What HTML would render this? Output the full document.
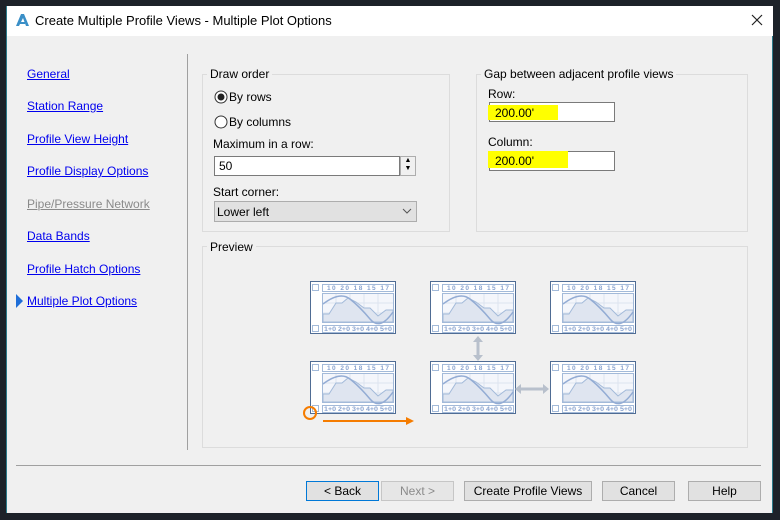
<!DOCTYPE html><html><head><style>
*{margin:0;padding:0;box-sizing:border-box}
body{width:780px;height:520px;background:#1d2229;position:relative;overflow:hidden;font-family:"Liberation Sans",sans-serif;font-size:12px;color:#000}
.a{position:absolute}
.win{left:6px;top:6px;width:767px;height:507px;background:#f0f0f0;border-left:1px solid #2b7a8a;border-right:1px solid #2b7a8a}
.title{left:7px;top:6px;width:766px;height:30px;background:#fff}
.lnk{color:#0000ee;text-decoration:underline;left:27px}
.grp{border:1px solid #dcdcdc}
.leg{background:#f0f0f0;padding:0 3px}
.btn{border:1px solid #adadad;background:#e1e1e1;text-align:center;line-height:18px;height:20px;top:481px}
.inp{background:#fff;border:1px solid #7a7a7a;height:20px}
</style></head><body>
<div class="a win"></div>
<div class="a title"></div>
<svg class="a" style="left:14px;top:12px" width="16" height="16"><path d="M2 14 L7 2 H10 L15 14 H12 L9 6 L5 14Z M6 10 H11 V12 H6Z" fill="#3a8fc7"/></svg>
<div class="a" style="left:35px;top:13px;font-size:13px">Create Multiple Profile Views - Multiple Plot Options</div>
<svg class="a" style="left:751px;top:14px" width="12" height="12"><path d="M1 1 L11 11 M11 1 L1 11" stroke="#222" stroke-width="1.2"/></svg>

<div class="a lnk" style="top:67px">General</div>
<div class="a lnk" style="top:99px">Station Range</div>
<div class="a lnk" style="top:132px">Profile View Height</div>
<div class="a lnk" style="top:164px">Profile Display Options</div>
<div class="a" style="left:27px;top:197px;color:#8a8a8a;text-decoration:underline">Pipe/Pressure Network</div>
<div class="a lnk" style="top:229px">Data Bands</div>
<div class="a lnk" style="top:262px">Profile Hatch Options</div>
<svg class="a" style="left:16px;top:294px" width="7" height="14"><path d="M0 0 L7 7 L0 14Z" fill="#1e6ed8"/></svg>
<div class="a lnk" style="top:294px">Multiple Plot Options</div>
<div class="a" style="left:187px;top:54px;width:1px;height:396px;background:#a0a0a0"></div>

<div class="a grp" style="left:202px;top:74px;width:248px;height:158px"></div>
<div class="a leg" style="left:207px;top:67px">Draw order</div>
<svg class="a" style="left:214px;top:90px" width="14" height="14"><circle cx="7" cy="7" r="6" fill="#fff" stroke="#333"/><circle cx="7" cy="7" r="3.5" fill="#222"/></svg>
<div class="a" style="left:229px;top:90px">By rows</div>
<svg class="a" style="left:214px;top:115px" width="14" height="14"><circle cx="7" cy="7" r="6" fill="#fff" stroke="#333"/></svg>
<div class="a" style="left:229px;top:115px">By columns</div>
<div class="a" style="left:213px;top:137px">Maximum in a row:</div>
<div class="a inp" style="left:214px;top:156px;width:186px"></div>
<div class="a" style="left:219px;top:159px">50</div>
<div class="a" style="left:400px;top:156px;width:16px;height:20px;border:1px solid #adadad;background:#f0f0f0;font-size:7px;line-height:8px;text-align:center">▲<br>▼</div>
<div class="a" style="left:213px;top:185px">Start corner:</div>
<div class="a" style="left:214px;top:201px;width:203px;height:21px;background:#e1e1e1;border:1px solid #adadad"></div>
<div class="a" style="left:217px;top:205px">Lower left</div>
<svg class="a" style="left:402px;top:208px" width="10" height="6"><path d="M1 1 L5 5 L9 1" fill="none" stroke="#555"/></svg>

<div class="a grp" style="left:476px;top:74px;width:272px;height:158px"></div>
<div class="a leg" style="left:481px;top:67px">Gap between adjacent profile views</div>
<div class="a" style="left:488px;top:87px">Row:</div>
<div class="a inp" style="left:489px;top:102px;width:126px"></div>
<div class="a" style="left:488px;top:105px;width:70px;height:15px;background:#ffff00"></div>
<div class="a" style="left:495px;top:106px">200.00'</div>
<div class="a" style="left:488px;top:135px">Column:</div>
<div class="a inp" style="left:489px;top:151px;width:126px"></div>
<div class="a" style="left:488px;top:151px;width:80px;height:17px;background:#ffff00"></div>
<div class="a" style="left:495px;top:154px">200.00'</div>

<div class="a grp" style="left:202px;top:246px;width:546px;height:202px"></div>
<div class="a leg" style="left:207px;top:240px">Preview</div>

<svg class="a" style="left:0;top:0" width="780" height="520">
<defs>
<g id="t">
<rect x="0.5" y="0.5" width="85" height="52" fill="#fff" stroke="#4f6c94"/>
<rect x="2.5" y="3.5" width="6" height="6" fill="none" stroke="#a3bad9"/>
<rect x="2.5" y="44.5" width="6" height="6" fill="none" stroke="#a3bad9"/>
<rect x="12.5" y="3.5" width="71" height="7" fill="none" stroke="#a3bad9"/>
<rect x="12.5" y="12.5" width="71" height="29" fill="#f4f6fb" stroke="#a3bad9"/>
<rect x="12.5" y="44.5" width="71" height="7" fill="none" stroke="#a3bad9"/>
<path d="M26 13V41 M40 13V41 M54 13V41 M68 13V41 M13 22H83 M13 32H83" stroke="#dde4ef"/>
<path d="M13 33 L19 33 L26 22 L32 22 L38 17 L46 21 L54 27 L60 27 L68 35 L76 29 L83 29 L83 41 L13 41Z" fill="#dfe5f0" stroke="#a3bad9"/>
<path d="M13 23 Q30 10 40 18 T60 38 T83 31" fill="none" stroke="#93acd4" stroke-width="1.5"/>
</g>
</defs>
<use href="#t" x="310" y="281"/><use href="#t" x="430" y="281"/><use href="#t" x="550" y="281"/>
<use href="#t" x="310" y="361"/><use href="#t" x="430" y="361"/><use href="#t" x="550" y="361"/>
<g font-family="Liberation Sans" font-size="6.5" font-weight="bold" fill="#8aa4cf">
<text x="327" y="290" textLength="62" lengthAdjust="spacing">10 20 18 15 17</text><text x="447" y="290" textLength="62" lengthAdjust="spacing">10 20 18 15 17</text><text x="567" y="290" textLength="62" lengthAdjust="spacing">10 20 18 15 17</text>
<text x="327" y="370" textLength="62" lengthAdjust="spacing">10 20 18 15 17</text><text x="447" y="370" textLength="62" lengthAdjust="spacing">10 20 18 15 17</text><text x="567" y="370" textLength="62" lengthAdjust="spacing">10 20 18 15 17</text>
<text x="324" y="331" textLength="68" lengthAdjust="spacingAndGlyphs">1+0 2+0 3+0 4+0 5+0</text><text x="444" y="331" textLength="68" lengthAdjust="spacingAndGlyphs">1+0 2+0 3+0 4+0 5+0</text><text x="564" y="331" textLength="68" lengthAdjust="spacingAndGlyphs">1+0 2+0 3+0 4+0 5+0</text>
<text x="324" y="411" textLength="68" lengthAdjust="spacingAndGlyphs">1+0 2+0 3+0 4+0 5+0</text><text x="444" y="411" textLength="68" lengthAdjust="spacingAndGlyphs">1+0 2+0 3+0 4+0 5+0</text><text x="564" y="411" textLength="68" lengthAdjust="spacingAndGlyphs">1+0 2+0 3+0 4+0 5+0</text>
</g>
<path d="M478 339 V358" stroke="#b8c0cc" stroke-width="3"/><path d="M473 342 L478 336 L483 342Z M473 355 L478 361 L483 355Z" fill="#b8c0cc"/>
<path d="M520 389 H545" stroke="#b8c0cc" stroke-width="3"/><path d="M521 384 L515 389 L521 394Z M543 384 L549 389 L543 394Z" fill="#b8c0cc"/>
<circle cx="310" cy="413" r="6" fill="none" stroke="#f57c00" stroke-width="2"/>
<path d="M323 421 H408" stroke="#f57c00" stroke-width="2"/><path d="M406 417 L414 421 L406 425Z" fill="#f57c00"/>
</svg>

<div class="a" style="left:16px;top:465px;width:745px;height:1px;background:#a0a0a0"></div>
<div class="a btn" style="left:306px;width:73px;border:1px solid #0078d7">&lt; Back</div>
<div class="a btn" style="left:381px;width:73px;color:#8a8a8a;background:#e6e6e6;border-color:#c6c6c6">Next &gt;</div>
<div class="a btn" style="left:464px;width:128px">Create Profile Views</div>
<div class="a btn" style="left:602px;width:73px">Cancel</div>
<div class="a btn" style="left:688px;width:73px">Help</div>
</body></html>
